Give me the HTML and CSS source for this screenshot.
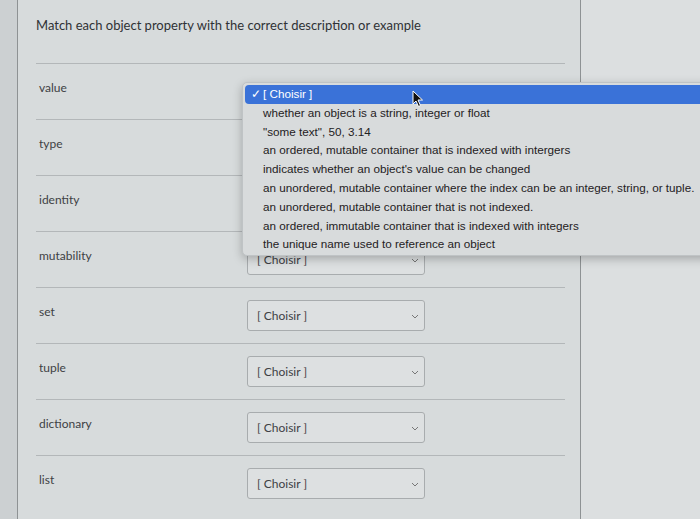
FILE: index.html
```html
<!DOCTYPE html>
<html lang="en">
<head>
  <meta charset="UTF-8">
  <title>Match each object property</title>
  <link rel="stylesheet" href="styles.css">
</head>
<body>
  <div class="page">
    <div class="edge"></div>

    <!-- question panel -->
    <div class="panel">
      <p class="question">Match each object property with the correct description or example</p>
      <div class="rows">
        <div class="row"><span class="label">value</span></div>
        <div class="row"><span class="label">type</span></div>
        <div class="row"><span class="label">identity</span></div>
        <div class="row">
          <span class="label">mutability</span>
          <div class="select"><span>[ Choisir ]</span><svg class="chev" width="8" height="5" viewBox="0 0 8 5"><path d="M1 1 L4 4 L7 1" fill="none" stroke="#777" stroke-width="1"/></svg></div>
        </div>
        <div class="row">
          <span class="label">set</span>
          <div class="select"><span>[ Choisir ]</span><svg class="chev" width="8" height="5" viewBox="0 0 8 5"><path d="M1 1 L4 4 L7 1" fill="none" stroke="#777" stroke-width="1"/></svg></div>
        </div>
        <div class="row">
          <span class="label">tuple</span>
          <div class="select"><span>[ Choisir ]</span><svg class="chev" width="8" height="5" viewBox="0 0 8 5"><path d="M1 1 L4 4 L7 1" fill="none" stroke="#777" stroke-width="1"/></svg></div>
        </div>
        <div class="row">
          <span class="label">dictionary</span>
          <div class="select"><span>[ Choisir ]</span><svg class="chev" width="8" height="5" viewBox="0 0 8 5"><path d="M1 1 L4 4 L7 1" fill="none" stroke="#777" stroke-width="1"/></svg></div>
        </div>
        <div class="row">
          <span class="label">list</span>
          <div class="select"><span>[ Choisir ]</span><svg class="chev" width="8" height="5" viewBox="0 0 8 5"><path d="M1 1 L4 4 L7 1" fill="none" stroke="#777" stroke-width="1"/></svg></div>
        </div>
      </div>
    </div>

    <div class="side"></div>
  </div>

  <!-- open dropdown menu -->
  <ul class="menu">
    <li class="active"><span class="check">✓</span>[ Choisir ]</li>
    <li>whether an object is a string, integer or float</li>
    <li>"some text", 50, 3.14</li>
    <li>an ordered, mutable container that is indexed with intergers</li>
    <li>indicates whether an object's value can be changed</li>
    <li>an unordered, mutable container where the index can be an integer, string, or tuple.</li>
    <li>an unordered, mutable container that is not indexed.</li>
    <li>an ordered, immutable container that is indexed with integers</li>
    <li>the unique name used to reference an object</li>
  </ul>

  <svg class="cursor" width="12" height="18" viewBox="0 0 12 18">
    <path d="M1 1 L1 14 L4 11 L6.5 16.5 L8.5 15.5 L6 10 L10.5 10 Z" fill="#111" stroke="#fff" stroke-width="1"/>
  </svg>
</body>
</html>
```

FILE: styles.css
```css
* { box-sizing: border-box; margin: 0; padding: 0; }
body {
  font-family: 'Lato', 'Liberation Sans', sans-serif;
  background: #d6dadc;
  width: 700px;
  height: 519px;
  overflow: hidden;
  position: relative;
  color: #3a3d40;
}
.page {
  display: flex;
  height: 519px;
}
.edge {
  width: 18px;
  background: #ccd0d2;
  border-right: 1px solid #8e9294;
}
.panel {
  width: 563px;
  padding: 0 15px 0 18px;
  background: #d7dbdc;
  border-right: 1px solid #8e9294;
}
.side {
  flex: 1;
  background: #dcdfe0;
}
.question {
  font-size: 13px;
  padding: 17px 0 0 0;
  height: 63px;
  color: #2f3235;
}
.row {
  display: flex;
  align-items: flex-start;
  height: 56px;
  border-top: 1px solid #b3b7b9;
}
.label {
  width: 211px;
  font-size: 12px;
  padding: 16px 0 0 3px;
  color: #3e4144;
}
.select {
  margin-top: 12px;
  width: 178px;
  height: 31px;
  display: flex;
  align-items: center;
  justify-content: space-between;
  padding: 0 5px 0 9px;
  background: #dde0e1;
  border: 1px solid #a8acae;
  border-radius: 3px;
  font-size: 12px;
  color: #3e4144;
}
.chev { margin-top: 1px; }

/* open dropdown */
.menu {
  position: absolute;
  left: 242px;
  top: 82px;
  width: 480px;
  height: 174px;
  list-style: none;
  padding: 2px 0 0 2px;
  background: #d8dbdc;
  border: 1px solid #bfc3c5;
  border-radius: 5px;
  box-shadow: 0 3px 10px rgba(0, 0, 0, 0.25);
  font-family: 'Liberation Sans', sans-serif;
  font-size: 11.7px;
  color: #1f2123;
}
.menu li {
  height: 18.8px;
  line-height: 18.8px;
  padding-left: 18px;
  white-space: nowrap;
}
.menu li.active {
  background: #3a72d8;
  color: #fff;
  border-radius: 4px;
  padding-left: 6px;
}
.check {
  display: inline-block;
  width: 12px;
}
.cursor {
  position: absolute;
  left: 412px;
  top: 90px;
}
```
